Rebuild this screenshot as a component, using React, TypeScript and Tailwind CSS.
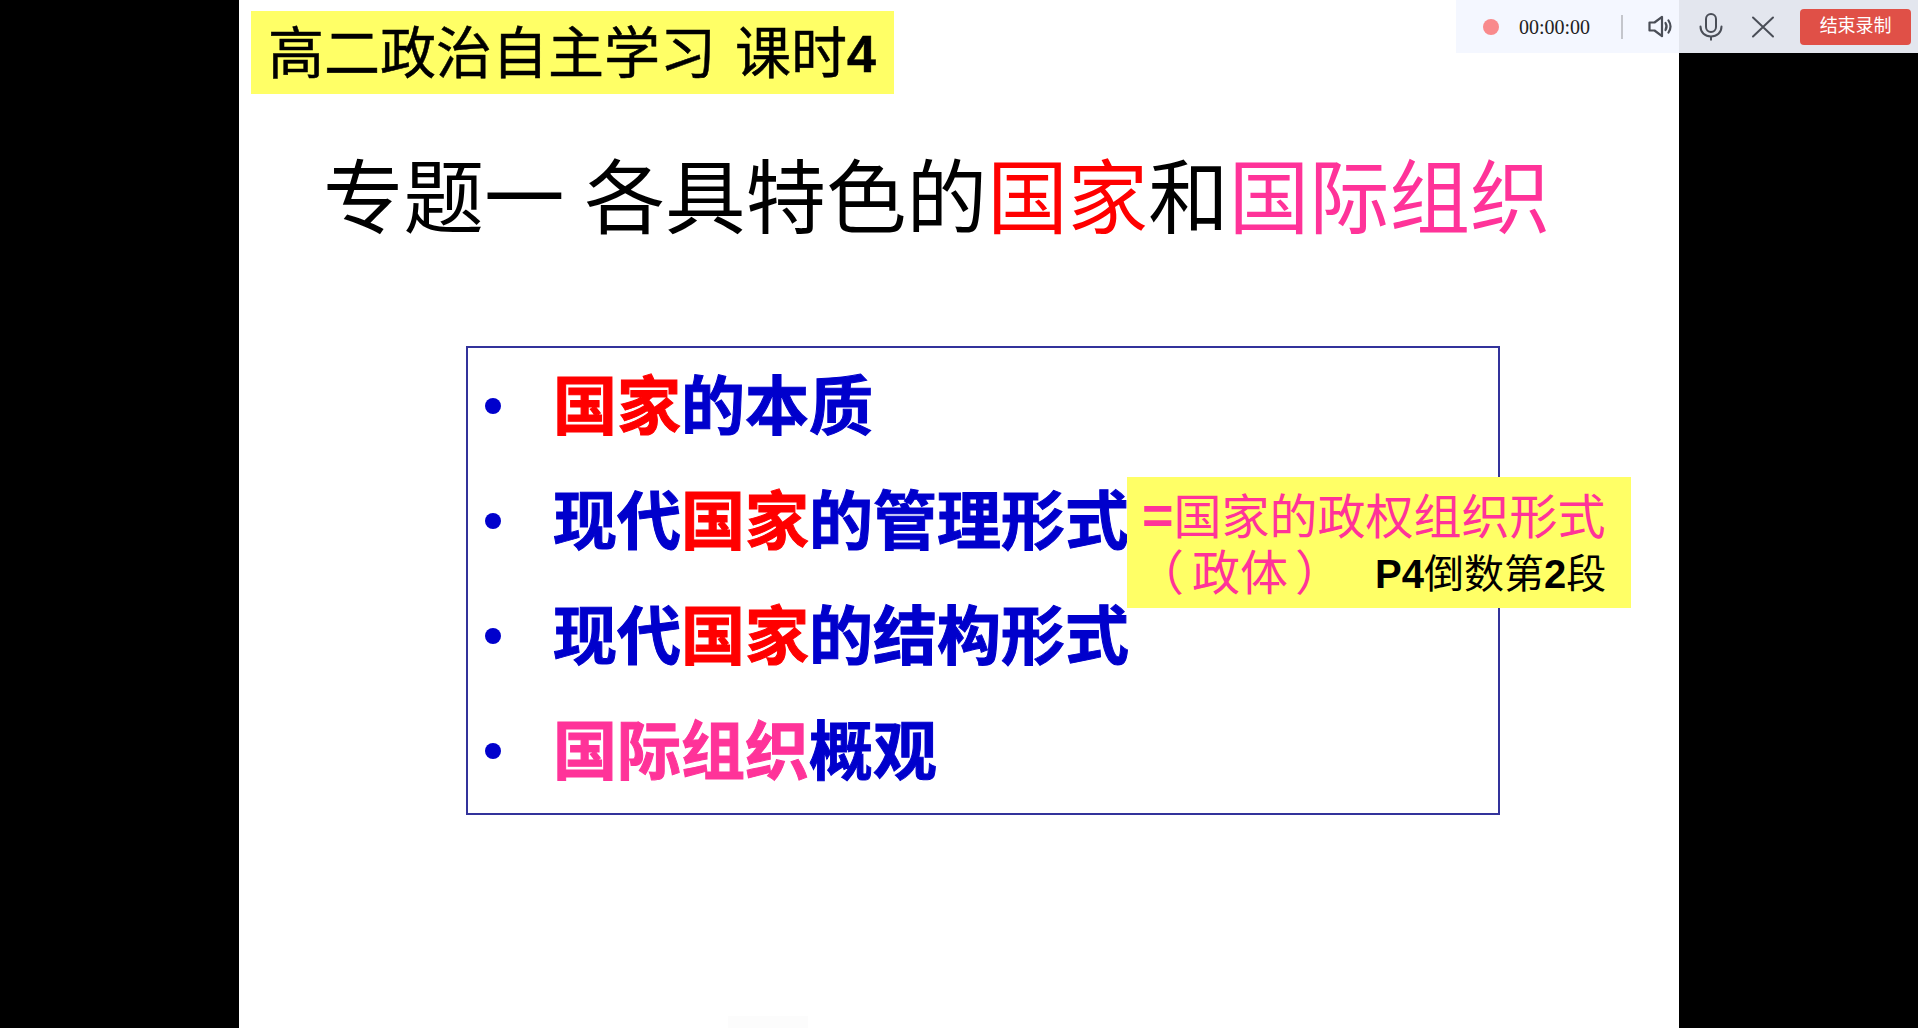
const sans = "font-['Liberation_Sans','Noto_Sans_CJK_SC',sans-serif]";
const serif = "font-['Liberation_Serif','Noto_Sans_CJK_SC',serif]";

function Row({ children }: { children: React.ReactNode }) {
  return (
    <div className="flex h-[115px] items-center pl-[17px]">
      <span className="h-4 w-4 rounded-full bg-[#0000cc]" />
      <p className="ml-[52px] mt-[2px] whitespace-nowrap text-[64px] font-bold leading-none text-[#0000cc] [-webkit-text-stroke:1px_currentColor]">{children}</p>
    </div>
  );
}

function RecordBar() {
  return (
    <div className="absolute right-0 top-0 flex h-[53px] w-[462px] items-center bg-[#f3f6ff]/[0.935]">
      <span className="ml-[27px] h-4 w-4 rounded-full bg-[#f98a8c]" />
      <span className={`ml-5 text-[20px] leading-none text-[#222] ${serif}`}>00:00:00</span>
      <span className="ml-[31px] h-[24px] w-[2px] bg-[#c4c6cc]" />
      {/* speaker */}
      <svg className="ml-[25px]" width="24" height="23" viewBox="0 0 24 23" fill="none" stroke="#4a4e57" strokeWidth="2.200">
        <path d="M1.500 7.500h5L14 1.800v19.400l-7.500-5.700h-5z" strokeLinejoin="round" />
        <path d="M17.500 8c1.300 2.200 1.300 4.800 0 7" strokeLinecap="round" />
        <path d="M20.500 5.500c2.400 3.600 2.400 8.400 0 12" strokeLinecap="round" />
      </svg>
      {/* mic */}
      <svg className="ml-[27px]" width="24" height="28" viewBox="0 0 24 28" fill="none" stroke="#4a4e57" strokeWidth="2">
        <rect x="7" y="1" width="10" height="18" rx="5" />
        <path d="M1.500 13.500c0 6 4.500 10 10.500 10s10.500-4 10.500-10" strokeLinecap="round" />
        <path d="M12 23.500v4" />
      </svg>
      {/* close */}
      <svg className="ml-[28px]" width="24" height="22" viewBox="0 0 24 22" fill="none" stroke="#4a4e57" strokeWidth="2">
        <path d="M2 1.500l20 19M22 1.500l-20 19" strokeLinecap="round" />
      </svg>
      <button className={`ml-[25px] flex h-9 w-[111px] items-center justify-center rounded-[4px] bg-[#e05047] text-[18px] text-white ${serif}`}>
        结束录制
      </button>
    </div>
  );
}

export default function App() {
  return (
    <div className="relative flex h-[1028px] w-[1918px] overflow-hidden bg-black">
      <main className={`relative ml-[239px] h-full w-[1440px] bg-white ${serif}`}>
        <div className="ml-3 mt-[11px] flex h-[83px] w-[643px] items-center whitespace-nowrap bg-[#ffff66] pl-[17px] pt-[2px] text-[56px] leading-none text-black [word-spacing:5px] [-webkit-text-stroke:0.5px_currentColor]">
          高二政治自主学习 课时<b className={`text-[52px] ${sans}`}>4</b>
        </div>

        <h1 className="ml-[84px] mt-[56px] h-[100px] whitespace-nowrap text-[80.500px] font-normal leading-[100px] text-black">
          专题一 各具特色的<span className="text-[#ff0000]">国家</span>和<span className="text-[#ff3399]">国际组织</span>
        </h1>

        <section className={`ml-[227px] mt-[96px] h-[469px] w-[1034px] border-2 border-[#33339b] ${sans}`}>
          <Row>
            <span className="text-[#ff0000]">国家</span>的本质
          </Row>
          <Row>
            现代<span className="text-[#ff0000]">国家</span>的管理形式
          </Row>
          <Row>
            现代<span className="text-[#ff0000]">国家</span>的结构形式
          </Row>
          <Row>
            <span className="text-[#ff3399]">国际组织</span>概观
          </Row>
        </section>

        {/* callout sits over the box edge */}
        <div className="absolute left-[888px] top-[477px] flex h-[131px] w-[504px] flex-col justify-center bg-[#ffff66] pl-[15px] pt-[4px]">
          <p className="whitespace-nowrap text-[48px] leading-[56px] text-[#ff3399]">
            <b className={`text-[54px] ${sans}`}>=</b>国家的政权组织形式
          </p>
          <div className="-ml-[6px] flex items-center whitespace-nowrap">
            <span className="text-[48px] leading-[56px] text-[#ff3399]">
              <span className="mr-2">（</span>政体<span className="ml-[7px]">）</span>
            </span>
            <span className="ml-[32px] text-[40px] leading-[56px] text-black">
              <b className={sans}>P4</b>倒数第<b className={sans}>2</b>段
            </span>
          </div>
        </div>

        <div className="absolute bottom-0 left-[489px] h-3 w-20 bg-[#fcfcfc]" />
      </main>
      <RecordBar />
    </div>
  );
}
